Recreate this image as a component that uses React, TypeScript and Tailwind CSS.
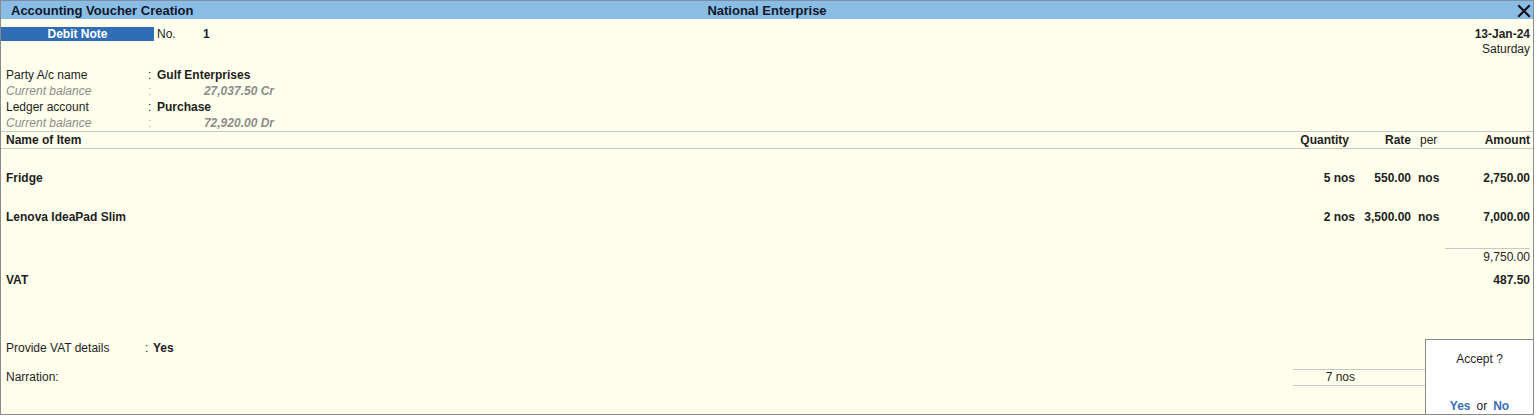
import React from "react";

// Tally-style voucher entry screen

const font = { fontFamily: '"Liberation Sans", Arial, sans-serif' };

type Item = { name: string; qty: string; rate: string; per: string; amount: string };

const items: Item[] = [
  { name: "Fridge", qty: "5 nos", rate: "550.00", per: "nos", amount: "2,750.00" },
  { name: "Lenova IdeaPad Slim", qty: "2 nos", rate: "3,500.00", per: "nos", amount: "7,000.00" },
];

function CloseIcon() {
  return (
    <svg width="14" height="14" viewBox="0 0 14 14" className="block">
      <path d="M2 2 L12 12 M12 2 L2 12" stroke="#111" strokeWidth="2.2" strokeLinecap="square" />
    </svg>
  );
}

function LedgerRow({
  label,
  value,
  muted = false,
  height,
}: {
  label: string;
  value: string;
  muted?: boolean;
  height: string;
}) {
  return (
    <div className={`flex items-center ${height}`}>
      <span
        className={`w-[147px] pl-[5px] ${muted ? "italic text-[#8c8c8c]" : "text-[#1e1e1e]"}`}
      >
        {label}
      </span>
      <span className={`w-[9px] ${muted ? "text-[#b0b0b0]" : "text-[#1e1e1e]"}`}>:</span>
      {muted ? (
        <span className="w-[117px] text-right font-bold italic text-[#8c8c8c]">{value}</span>
      ) : (
        <span className="font-bold text-[#1e1e1e]">{value}</span>
      )}
    </div>
  );
}

export default function App() {
  return (
    <div
      style={font}
      className="relative h-[416px] w-[1536px] overflow-hidden bg-white text-[12px] text-[#1e1e1e]"
    >
      <div className="flex h-[415px] w-[1534px] flex-col border-b border-l border-r border-[#8a8a8a] bg-[#fefeec]">
        {/* Title bar */}
        <div className="grid h-[19px] shrink-0 grid-cols-3 items-center border-t border-[#7d8fa3] bg-[#8abde6] text-[13px] font-bold text-[#101828]">
          <span className="pl-[10px]">Accounting Voucher Creation</span>
          <span className="text-center">National Enterprise</span>
          <span className="flex justify-end pr-[2px]">
            <CloseIcon />
          </span>
        </div>

        {/* Voucher type / no / date */}
        <div className="mt-[8px] flex h-[14px] items-center">
          <div className="flex h-[14px] w-[153px] items-center justify-center bg-[#2f6db5] font-bold text-white">
            Debit Note
          </div>
          <span className="ml-[3px] w-[46px]">No.</span>
          <span className="font-bold">1</span>
          <span className="ml-auto pr-[3px] font-bold">13-Jan-24</span>
        </div>
        <div className="flex h-[16px] items-center justify-end pr-[3px]">Saturday</div>

        {/* Ledger block */}
        <div className="mt-[9px]">
          <LedgerRow label="Party A/c name" value="Gulf Enterprises" height="h-[17px]" />
          <LedgerRow label="Current balance" value="27,037.50 Cr" muted height="h-[16px]" />
          <LedgerRow label="Ledger account" value="Purchase" height="h-[16px]" />
          <LedgerRow label="Current balance" value="72,920.00 Dr" muted height="h-[15px]" />
        </div>

        {/* Items header */}
        <div className="mt-[1px] flex h-[18px] items-center border-y border-[#c8c8c8] pr-[3px] font-bold">
          <span className="flex-1 pl-[5px]">Name of Item</span>
          <span className="w-[63px] pr-[7px] text-right">Quantity</span>
          <span className="w-[58px] pr-[3px] text-right">Rate</span>
          <span className="w-[31px] pl-[6px] font-normal">per</span>
          <span className="w-[85px] text-right">Amount</span>
        </div>

        {/* Item rows */}
        <div className="flex flex-col gap-[23px] pt-[21px] pr-[3px] font-bold">
          {items.map((it) => (
            <div key={it.name} className="flex h-[16px] items-center">
              <span className="flex-1 pl-[5px]">{it.name}</span>
              <span className="w-[63px] pr-[1px] text-right">{it.qty}</span>
              <span className="w-[58px] pr-[3px] text-right">{it.rate}</span>
              <span className="w-[31px] pl-[4px]">{it.per}</span>
              <span className="w-[85px] text-right">{it.amount}</span>
            </div>
          ))}
        </div>

        {/* Subtotal */}
        <div className="mt-[23px] flex justify-end pr-[3px]">
          <span className="h-[17px] w-[85px] border-t border-[#c8c8c8] text-right leading-[16px]">
            9,750.00
          </span>
        </div>

        {/* VAT */}
        <div className="mt-[7px] flex h-[16px] items-center pr-[3px] font-bold">
          <span className="flex-1 pl-[5px]">VAT</span>
          <span>487.50</span>
        </div>

        {/* Provide VAT details */}
        <div className="mt-[52px] flex h-[16px] items-center">
          <span className="w-[144px] pl-[5px]">Provide VAT details</span>
          <span className="w-[8px]">:</span>
          <span className="font-bold">Yes</span>
        </div>

        {/* Narration + total qty */}
        <div className="mt-[12px] flex items-center">
          <span className="flex-1 pl-[5px]">Narration:</span>
          <div className="flex h-[17px] w-[240px] items-center border-y border-[#c8c8c8]">
            <span className="w-[63px] pr-[1px] text-right">7 nos</span>
          </div>
        </div>
      </div>

      {/* Accept dialog */}
      <div className="absolute left-[1425px] top-[339px] flex h-[76px] w-[109px] flex-col items-center border border-[#8a8a8a] bg-white">
        <span className="mt-[10px] text-[#1e1e1e]">Accept ?</span>
        <span className="mt-auto mb-[-1px] flex items-center">
          <span className="font-bold text-[#3a6fb8]">Yes</span>
          <span className="mx-[6px] text-[#1e1e1e]">or</span>
          <span className="font-bold text-[#3a6fb8]">No</span>
        </span>
      </div>
    </div>
  );
}
